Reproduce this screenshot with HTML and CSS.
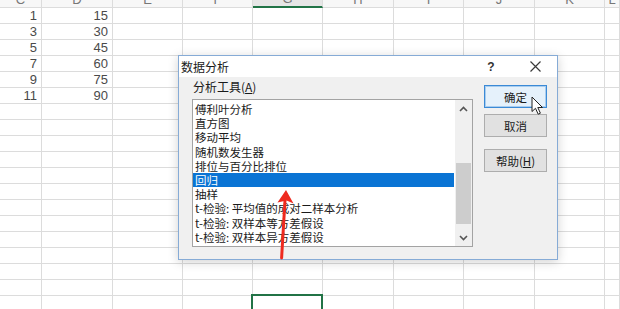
FILE: index.html
```html
<!DOCTYPE html>
<html lang="zh-CN">
<head>
<meta charset="utf-8">
<title>数据分析</title>
<link rel="stylesheet" href="styles.css">
</head>
<body>
<div class="sheet">
  <div class="hd"><span>C</span></div><div class="hd"><span>D</span></div><div class="hd"><span>E</span></div><div class="hd"><span>F</span></div><div class="hd hd-sel"><span>G</span></div><div class="hd"><span>H</span></div><div class="hd"><span>I</span></div><div class="hd"><span>J</span></div><div class="hd"><span>K</span></div><div class="hd"><span>L</span></div>
  <div class="c n">1</div><div class="c n">15</div><div class="c"></div><div class="c"></div><div class="c"></div><div class="c"></div><div class="c"></div><div class="c"></div><div class="c"></div><div class="c"></div>
  <div class="c n">3</div><div class="c n">30</div><div class="c"></div><div class="c"></div><div class="c"></div><div class="c"></div><div class="c"></div><div class="c"></div><div class="c"></div><div class="c"></div>
  <div class="c n">5</div><div class="c n">45</div><div class="c"></div><div class="c"></div><div class="c"></div><div class="c"></div><div class="c"></div><div class="c"></div><div class="c"></div><div class="c"></div>
  <div class="c n">7</div><div class="c n">60</div><div class="c"></div><div class="c"></div><div class="c"></div><div class="c"></div><div class="c"></div><div class="c"></div><div class="c"></div><div class="c"></div>
  <div class="c n">9</div><div class="c n">75</div><div class="c"></div><div class="c"></div><div class="c"></div><div class="c"></div><div class="c"></div><div class="c"></div><div class="c"></div><div class="c"></div>
  <div class="c n">11</div><div class="c n">90</div><div class="c"></div><div class="c"></div><div class="c"></div><div class="c"></div><div class="c"></div><div class="c"></div><div class="c"></div><div class="c"></div>
  <div class="c"></div><div class="c"></div><div class="c"></div><div class="c"></div><div class="c"></div><div class="c"></div><div class="c"></div><div class="c"></div><div class="c"></div><div class="c"></div>
  <div class="c"></div><div class="c"></div><div class="c"></div><div class="c"></div><div class="c"></div><div class="c"></div><div class="c"></div><div class="c"></div><div class="c"></div><div class="c"></div>
  <div class="c"></div><div class="c"></div><div class="c"></div><div class="c"></div><div class="c"></div><div class="c"></div><div class="c"></div><div class="c"></div><div class="c"></div><div class="c"></div>
  <div class="c"></div><div class="c"></div><div class="c"></div><div class="c"></div><div class="c"></div><div class="c"></div><div class="c"></div><div class="c"></div><div class="c"></div><div class="c"></div>
  <div class="c"></div><div class="c"></div><div class="c"></div><div class="c"></div><div class="c"></div><div class="c"></div><div class="c"></div><div class="c"></div><div class="c"></div><div class="c"></div>
  <div class="c"></div><div class="c"></div><div class="c"></div><div class="c"></div><div class="c"></div><div class="c"></div><div class="c"></div><div class="c"></div><div class="c"></div><div class="c"></div>
  <div class="c"></div><div class="c"></div><div class="c"></div><div class="c"></div><div class="c"></div><div class="c"></div><div class="c"></div><div class="c"></div><div class="c"></div><div class="c"></div>
  <div class="c"></div><div class="c"></div><div class="c"></div><div class="c"></div><div class="c"></div><div class="c"></div><div class="c"></div><div class="c"></div><div class="c"></div><div class="c"></div>
  <div class="c"></div><div class="c"></div><div class="c"></div><div class="c"></div><div class="c"></div><div class="c"></div><div class="c"></div><div class="c"></div><div class="c"></div><div class="c"></div>
  <div class="c"></div><div class="c"></div><div class="c"></div><div class="c"></div><div class="c"></div><div class="c"></div><div class="c"></div><div class="c"></div><div class="c"></div><div class="c"></div>
  <div class="c"></div><div class="c"></div><div class="c"></div><div class="c"></div><div class="c"></div><div class="c"></div><div class="c"></div><div class="c"></div><div class="c"></div><div class="c"></div>
  <div class="c"></div><div class="c"></div><div class="c"></div><div class="c"></div><div class="c"></div><div class="c"></div><div class="c"></div><div class="c"></div><div class="c"></div><div class="c"></div>
  <div class="c"></div><div class="c"></div><div class="c"></div><div class="c"></div><div class="c sel"></div><div class="c"></div><div class="c"></div><div class="c"></div><div class="c"></div><div class="c"></div>
</div>

<div class="dialog">
  <div class="titlebar">
    <span class="title">数据分析</span>
    <span class="help">?</span>
    <span class="close">
      <svg width="11" height="11" viewBox="0 0 11 11"><path d="M0.5 0.5 L10.5 10.5 M10.5 0.5 L0.5 10.5" stroke="#3a3a3a" stroke-width="1.2" fill="none"/></svg>
    </span>
  </div>
  <div class="dbody">
    <div class="left">
      <div class="label">分析工具(<u>A</u>)</div>
      <div class="listbox">
        <ul class="items">
          <li>傅利叶分析</li>
          <li>直方图</li>
          <li>移动平均</li>
          <li>随机数发生器</li>
          <li>排位与百分比排位</li>
          <li class="on">回归</li>
          <li>抽样</li>
          <li>t-检验: 平均值的成对二样本分析</li>
          <li>t-检验: 双样本等方差假设</li>
          <li>t-检验: 双样本异方差假设</li>
        </ul>
        <div class="scrollbar">
          <span class="arrow">
            <svg width="9" height="6" viewBox="0 0 9 6"><path d="M1 5 L4.5 1.5 L8 5" stroke="#555" stroke-width="1.6" fill="none"/></svg>
          </span>
          <span class="track"><span class="thumb"></span></span>
          <span class="arrow">
            <svg width="9" height="6" viewBox="0 0 9 6"><path d="M1 1 L4.5 4.5 L8 1" stroke="#555" stroke-width="1.6" fill="none"/></svg>
          </span>
        </div>
      </div>
    </div>
    <div class="buttons">
      <button class="btn btn-default">确定</button>
      <button class="btn">取消</button>
      <button class="btn btn-help">帮助(<u>H</u>)</button>
    </div>
  </div>
</div>

<svg class="cursor" width="14" height="20" viewBox="0 0 14 20">
  <path d="M1 1 L1 15.5 L4.5 12.3 L7.2 18.2 L9.4 17.2 L6.8 11.5 L11.5 11.5 Z" fill="#fff" stroke="#222" stroke-width="1" stroke-linejoin="round"/>
</svg>

<svg class="redarrow" width="30" height="80" viewBox="0 0 30 80">
  <path d="M15.2 12 L11.6 73" stroke="#ee2a1f" stroke-width="3" stroke-linecap="round" fill="none"/>
  <path d="M16 5 L23.5 18.5 L16.6 15.6 L7.5 17.6 Z" fill="#ee2a1f"/>
</svg>
</body>
</html>
```
FILE: styles.css
```css
html, body {
  margin: 0;
  padding: 0;
  width: 620px;
  height: 309px;
  overflow: hidden;
  background: #fff;
}

.sheet {
  display: grid;
  grid-template-columns: 42px 71px 70px 70px 70px 71px 70px 71px 70px 1fr;
  grid-template-rows: 8px;
  grid-auto-rows: 16px;
  font-family: "Liberation Sans", Arial, sans-serif;
}

.hd, .c {
  box-sizing: border-box;
  border-right: 1px solid #dcdcdc;
  border-bottom: 1px solid #dcdcdc;
}

.hd {
  display: flex;
  align-items: flex-end;
  justify-content: center;
  overflow: hidden;
  background: #f7f7f7;
  color: #777;
  font-size: 13px;
}

.hd span {
  line-height: 13px;
  margin-bottom: 1px;
}

.hd-sel {
  border-bottom: 2px solid #217346;
  background: #e6e6e6;
}

.c {
  position: relative;
}

.n {
  font-size: 13px;
  line-height: 15px;
  color: #4a4a4a;
  text-align: right;
  padding-right: 4px;
}

.sel::after {
  content: "";
  position: absolute;
  left: -2px;
  top: -2px;
  right: -1px;
  bottom: -1px;
  border: 2px solid #217346;
}

/* dialog */
.dialog {
  position: absolute;
  left: 178px;
  top: 55px;
  width: 380px;
  height: 205px;
  box-sizing: border-box;
  border: 1px solid #86abd6;
  background: #f0f0f0;
  box-shadow: 0 2px 10px rgba(0, 0, 0, 0.18);
  font-family: "Noto Sans CJK SC", "Liberation Sans", sans-serif;
  font-size: 11.5px;
  color: #1a1a1a;
}

.titlebar {
  height: 21px;
  background: #fff;
  display: flex;
  align-items: center;
  padding-left: 2px;
}

.title {
  flex: 1;
  font-size: 12px;
  line-height: 16px;
}

.help {
  width: 20px;
  margin-right: 12px;
  text-align: center;
  font-family: "Liberation Sans", sans-serif;
  font-weight: bold;
  font-size: 12px;
  color: #333;
}

.close {
  width: 44px;
  display: flex;
  justify-content: center;
  align-items: center;
}

.dbody {
  display: flex;
  padding: 2px 10px 0 13px;
}

.left {
  width: 281px;
}

.label {
  line-height: 16px;
  font-size: 12px;
  margin-bottom: 4px;
  padding-left: 1px;
}

.label u, .btn u {
  text-decoration: underline;
  text-underline-offset: 1px;
}

.listbox {
  display: flex;
  height: 148px;
  box-sizing: border-box;
  border: 1px solid #a3a3a3;
  background: #fff;
}

.items {
  list-style: none;
  margin: 0;
  padding: 2px 0 0 0;
  flex: 1;
  overflow: hidden;
}

.items li {
  height: 14.2px;
  line-height: 14.2px;
  padding-left: 2px;
  margin-right: 1px;
  white-space: nowrap;
}

.items li.on {
  background: #0a74d4;
  color: #fff;
}

.scrollbar {
  width: 17px;
  display: flex;
  flex-direction: column;
  background: #f0f0f0;
}

.arrow {
  height: 17px;
  display: flex;
  align-items: center;
  justify-content: center;
}

.track {
  flex: 1;
  display: flex;
  flex-direction: column;
  align-items: center;
}

.thumb {
  width: 15px;
  height: 61px;
  margin-top: 46px;
  background: #cdcdcd;
}

.buttons {
  display: flex;
  flex-direction: column;
  margin-left: 11px;
  margin-top: 6px;
}

.btn {
  width: 63px;
  height: 23px;
  box-sizing: border-box;
  padding: 0;
  border: 1px solid #adadad;
  background: #e1e1e1;
  font-family: "Noto Sans CJK SC", "Liberation Sans", sans-serif;
  font-size: 11.5px;
  color: #1a1a1a;
  margin-bottom: 6px;
}

.btn-default {
  border: 1px solid #3b8ad6;
  background: #e5f1fb;
  box-shadow: inset 0 0 0 1px #a9cdef;
}

.btn-help {
  margin-top: 6px;
}

.cursor {
  position: absolute;
  left: 531px;
  top: 96px;
}

.redarrow {
  position: absolute;
  left: 270px;
  top: 185px;
}
```
